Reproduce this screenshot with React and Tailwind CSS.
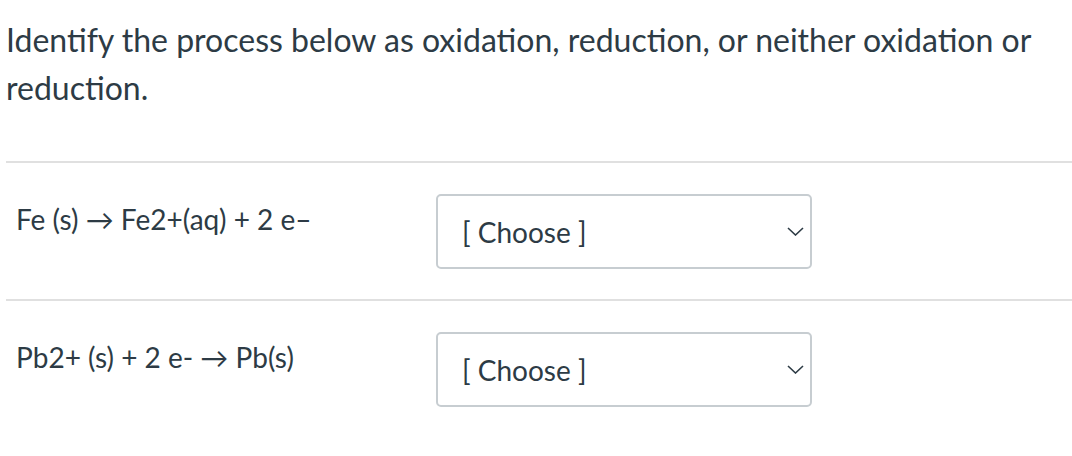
const rows = [
  { label: "Fe (s) → Fe2+(aq) + 2 e–" },
  { label: "Pb2+ (s) + 2 e- → Pb(s)" },
];

function Choose() {
  return (
    <div className="w-[376px] h-[75px] border-2 border-[#c7cdd1] rounded-[5px] bg-white flex items-center justify-between pl-[24px] pr-[6px]">
      <span className="text-[28px] text-[#2d3b45]">[ Choose ]</span>
      <svg width="17" height="9" viewBox="0 0 17 9" fill="none" className="text-[#2d3b45]">
        <polyline points="1,1 8.5,8 16,1" stroke="currentColor" strokeWidth="1.6" />
      </svg>
    </div>
  );
}

export default function App() {
  return (
    <div className="w-[1072px] h-[456px] bg-white overflow-hidden text-[#2d3b45] font-['Lato',sans-serif]">
      <p className="pl-[6px] pt-[16px] text-[32px] leading-[48px] pr-[10px]">
        Identify the process below as oxidation, reduction, or neither oxidation or reduction.
      </p>
      <div className="mt-[49px] ml-[6px] border-t-2 border-[#e0e0e0]" />
      {rows.map((r, i) => (
        <div key={i}>
          <div className="flex items-start pl-[16px] pt-[31px] pb-[30px]">
            <div className="w-[420px] text-[28px] leading-[36px] pt-[7px]">{r.label}</div>
            <Choose />
          </div>
          {i === 0 && <div className="ml-[6px] border-t-2 border-[#e0e0e0]" />}
        </div>
      ))}
    </div>
  );
}
